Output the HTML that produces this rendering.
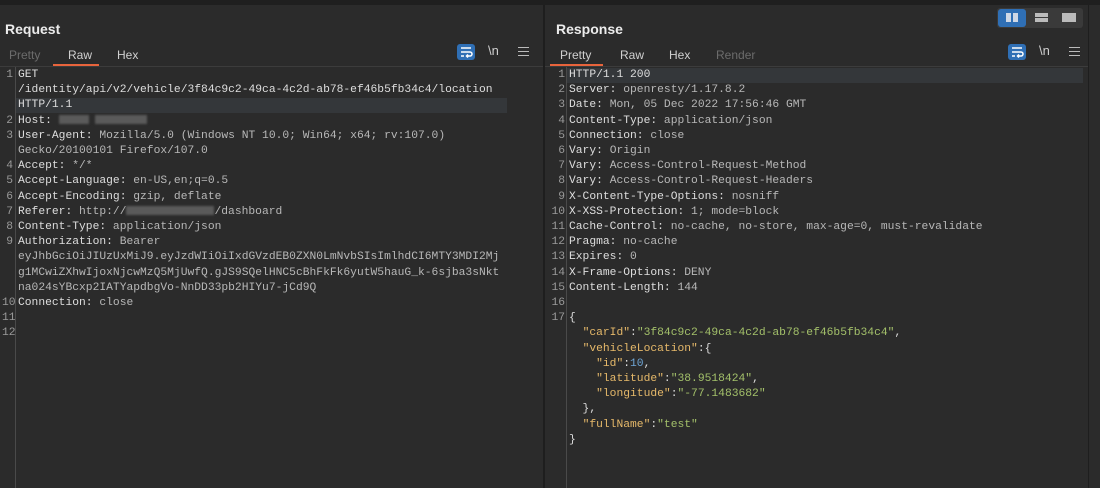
<!DOCTYPE html>
<html><head><meta charset="utf-8"><style>
*{margin:0;padding:0;box-sizing:border-box}
body{width:1100px;height:488px;background:#2b2b2b;overflow:hidden;font-family:"Liberation Sans",sans-serif;position:relative}
.top{position:absolute;left:0;top:0;width:1100px;height:5px;background:#1f1f1f}
.div{position:absolute;top:5px;bottom:0;left:543px;width:2px;background:#1e1e1e}
.rdiv{position:absolute;top:5px;bottom:0;left:1088px;width:1px;background:#1e1e1e}
.h{position:absolute;top:21px;font-weight:bold;font-size:14px;color:#ececec}
.tab{position:absolute;top:48px;font-size:12px;color:#d0d0d0}
.dim{color:#6c6c6c}
.ul{position:absolute;top:64px;height:2px;background:#e8643c}
.tb{position:absolute;top:66px;height:1px;background:#3c3c3c}
.code{position:absolute;top:68px;font-family:"Liberation Mono",monospace;font-size:11.3px;line-height:15.2px;color:#dedede;white-space:pre}
.gut{position:absolute;top:68px;font-family:"Liberation Mono",monospace;font-size:11.3px;line-height:15.2px;color:#9a9a9a;white-space:pre;text-align:right}
.sep{position:absolute;top:67px;bottom:0;width:1px;background:#4a4a4a}
.hl{position:absolute;height:15px;background:#34373a}
.v{color:#b8b8b8}
.k{color:#e6b96a}.s{color:#a3c06a}.n{color:#6fa6d6}
.red{display:inline-block;background:#5a5a5a;height:9px;vertical-align:middle;filter:blur(1px)}
.icon{position:absolute;top:44px;width:18px;height:16px;border-radius:3px;background:#2f6fb5}
.nl{position:absolute;top:43px;font-size:13px;color:#cfcfcf}
.menu{position:absolute;top:47px;width:11px;height:9px;border-top:1.5px solid #bbb;border-bottom:1.5px solid #bbb}
.menu:after{content:"";position:absolute;left:0;right:0;top:2.5px;height:1.5px;background:#bbb}
.lay{position:absolute;top:8px;left:997px;width:86px;height:20px;background:#3a3a3a;border-radius:3px}
</style></head><body>
<div class="top"></div>
<div class="div"></div><div class="rdiv"></div>

<div class="h" style="left:5px">Request</div>
<div class="tab dim" style="left:9px">Pretty</div>
<div class="tab" style="left:68px">Raw</div>
<div class="tab" style="left:117px">Hex</div>
<div class="ul" style="left:53px;width:46px"></div>
<div class="tb" style="left:0;width:543px"></div>
<div class="icon" style="left:457px"><svg width="18" height="16" viewBox="0 0 18 16"><path d="M4 4h10M4 8h9a2 2 0 0 1 0 4h-3M4 12h3M11 10.5l-1.5 1.5 1.5 1.5" stroke="#fff" stroke-width="1.5" fill="none"/></svg></div>
<div class="nl" style="left:488px">\n</div>
<div class="menu" style="left:518px"></div>
<div class="hl" style="left:16px;top:98px;width:491px"></div>
<div class="gut" style="left:2px;width:11px">1


2
3

4
5
6
7
8
9



10
11
12</div>
<div class="sep" style="left:15px"></div>
<div class="code" style="left:18px">GET
/identity/api/v2/vehicle/3f84c9c2-49ca-4c2d-ab78-ef46b5fb34c4/location
HTTP/1.1
Host: <span class="red" style="width:30px"></span> <span class="red" style="width:52px"></span>
User-Agent: <span class="v">Mozilla/5.0 (Windows NT 10.0; Win64; x64; rv:107.0)</span>
<span class="v">Gecko/20100101 Firefox/107.0</span>
Accept: <span class="v">*/*</span>
Accept-Language: <span class="v">en-US,en;q=0.5</span>
Accept-Encoding: <span class="v">gzip, deflate</span>
Referer: <span class="v">http://</span><span class="red" style="width:88px"></span><span class="v">/dashboard</span>
Content-Type: <span class="v">application/json</span>
Authorization: <span class="v">Bearer</span>
<span class="v">eyJhbGciOiJIUzUxMiJ9.eyJzdWIiOiIxdGVzdEB0ZXN0LmNvbSIsImlhdCI6MTY3MDI2Mj</span>
<span class="v">g1MCwiZXhwIjoxNjcwMzQ5MjUwfQ.gJS9SQelHNC5cBhFkFk6yutW5hauG_k-6sjba3sNkt</span>
<span class="v">na024sYBcxp2IATYapdbgVo-NnDD33pb2HIYu7-jCd9Q</span>
Connection: <span class="v">close</span></div>

<div class="lay"></div>
<div style="position:absolute;left:998px;top:9px;width:28px;height:18px;background:#2f6fb5;border-radius:3px"></div>
<div style="position:absolute;left:1006px;top:13px;width:5px;height:9px;background:#cfd8e6"></div>
<div style="position:absolute;left:1013px;top:13px;width:5px;height:9px;background:#cfd8e6"></div>
<div style="position:absolute;left:1035px;top:13px;width:13px;height:4px;background:#bbb"></div>
<div style="position:absolute;left:1035px;top:18px;width:13px;height:4px;background:#bbb"></div>
<div style="position:absolute;left:1062px;top:13px;width:14px;height:9px;background:#bbb"></div>

<div class="h" style="left:556px">Response</div>
<div class="tab" style="left:560px">Pretty</div>
<div class="tab" style="left:620px">Raw</div>
<div class="tab" style="left:669px">Hex</div>
<div class="tab dim" style="left:716px">Render</div>
<div class="ul" style="left:550px;width:53px"></div>
<div class="tb" style="left:545px;width:543px"></div>
<div class="icon" style="left:1008px"><svg width="18" height="16" viewBox="0 0 18 16"><path d="M4 4h10M4 8h9a2 2 0 0 1 0 4h-3M4 12h3M11 10.5l-1.5 1.5 1.5 1.5" stroke="#fff" stroke-width="1.5" fill="none"/></svg></div>
<div class="nl" style="left:1039px">\n</div>
<div class="menu" style="left:1069px"></div>
<div class="hl" style="left:567px;top:68px;width:516px"></div>
<div class="gut" style="left:548px;width:17px">1
2
3
4
5
6
7
8
9
10
11
12
13
14
15
16
17</div>
<div class="sep" style="left:566px"></div>
<div class="code" style="left:569px">HTTP/1.1 200
Server: <span class="v">openresty/1.17.8.2</span>
Date: <span class="v">Mon, 05 Dec 2022 17:56:46 GMT</span>
Content-Type: <span class="v">application/json</span>
Connection: <span class="v">close</span>
Vary: <span class="v">Origin</span>
Vary: <span class="v">Access-Control-Request-Method</span>
Vary: <span class="v">Access-Control-Request-Headers</span>
X-Content-Type-Options: <span class="v">nosniff</span>
X-XSS-Protection: <span class="v">1; mode=block</span>
Cache-Control: <span class="v">no-cache, no-store, max-age=0, must-revalidate</span>
Pragma: <span class="v">no-cache</span>
Expires: <span class="v">0</span>
X-Frame-Options: <span class="v">DENY</span>
Content-Length: <span class="v">144</span>

{
  <span class="k">"carId"</span>:<span class="s">"3f84c9c2-49ca-4c2d-ab78-ef46b5fb34c4"</span>,
  <span class="k">"vehicleLocation"</span>:{
    <span class="k">"id"</span>:<span class="n">10</span>,
    <span class="k">"latitude"</span>:<span class="s">"38.9518424"</span>,
    <span class="k">"longitude"</span>:<span class="s">"-77.1483682"</span>
  },
  <span class="k">"fullName"</span>:<span class="s">"test"</span>
}</div>
</body></html>
